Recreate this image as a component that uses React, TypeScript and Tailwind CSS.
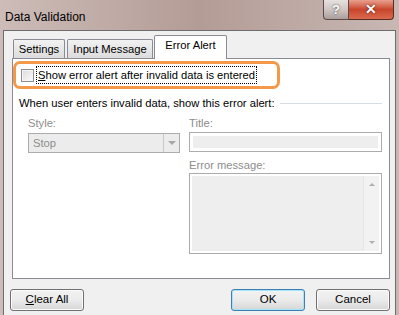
import React from "react";

const font = { fontFamily: '"Liberation Sans", Arial, sans-serif' };

function DialogButton({
  label,
  accel,
  focused,
}: {
  label: string;
  accel?: string;
  focused?: boolean;
}) {
  const rest = accel ? label.slice(1) : label;
  return (
    <button
      className={
        "w-[74px] h-[22px] rounded-[3px] border text-[11.5px] text-black bg-gradient-to-b from-[#f2f2f2] via-[#ebebeb] to-[#d6d6d6] " +
        (focused
          ? "border-[#3c7fb1] shadow-[inset_0_0_0_1px_#a6e2f8]"
          : "border-[#707070] shadow-[inset_0_0_0_1px_#fbfbfb]")
      }
    >
      {accel ? <span className="underline">{accel}</span> : null}
      {rest}
    </button>
  );
}

export default function App() {
  return (
    <div
      className="w-[399px] h-[315px] overflow-hidden flex flex-col bg-gradient-to-r from-[#cdbcb8] via-[#b49c96] to-[#c8b7b3]"
      style={font}
    >
      {/* title bar */}
      <div className="h-[30px] flex items-start relative">
        <div className="pl-[5px] pt-[8px] text-[12px] text-black">Data Validation</div>
        <div className="ml-auto mr-[5px] flex">
          <div className="w-[26px] h-[20px] rounded-bl-[4px] border border-t-0 border-[#5c4a46] bg-gradient-to-b from-[#e7e1df] via-[#cfc6c4] to-[#a99e9b] flex items-center justify-center text-[13px] font-bold text-white [text-shadow:0_0_2px_#333]">
            ?
          </div>
          <div className="w-[45px] h-[20px] rounded-br-[4px] border border-l-0 border-t-0 border-[#5c2a20] bg-gradient-to-b from-[#e8a08f] via-[#c9452b] to-[#d96a4f] flex items-center justify-center text-[14px] font-bold text-white [text-shadow:0_0_2px_#400]">
            ✕
          </div>
        </div>
      </div>

      {/* client area */}
      <div className="flex-1 ml-[3px] mr-[3px] border border-b-0 border-[#6d6d6d] bg-[#f0f0f0] text-[11.2px] text-black flex flex-col">
        {/* tabs */}
        <div className="flex items-end h-[27px] pl-[9px] relative z-10">
          <div className="w-[52px] h-[19px] flex items-center justify-center border border-b-0 border-[#898c95] rounded-t-[2px] bg-gradient-to-b from-[#f2f2f2] to-[#dcdcdc]">
            Settings
          </div>
          <div className="w-[86px] h-[19px] ml-[2px] flex items-center justify-center border border-b-0 border-[#898c95] rounded-t-[2px] bg-gradient-to-b from-[#f2f2f2] to-[#dcdcdc]">
            Input Message
          </div>
          <div className="w-[73px] h-[24px] ml-[1px] -mb-px pb-[4px] flex items-center justify-center border border-b-0 border-[#898c95] rounded-t-[2px] bg-white">
            Error Alert
          </div>
        </div>

        {/* tab panel */}
        <div className="ml-[8px] mr-[5px] h-[221px] border border-[#898c95] bg-white flex flex-col">
          <div className="mt-[2px] w-[267px] h-[28px] border-[3px] border-[#f4994a] rounded-[7px] flex items-center pl-[5px]">
            <div className="w-[13px] h-[13px] border border-[#8f8f8f] bg-gradient-to-br from-[#dcdcdc] to-[#fbfbfb] shadow-[inset_0_0_0_1px_#f4f4f4]" />
            <div className="ml-[2px] px-[1px] border border-dotted border-black leading-[16px]">
              <span className="underline">S</span>how error alert after invalid data is entered
            </div>
          </div>

          <div className="mt-[7px] ml-[6px] mr-[7px] flex items-center leading-[14px]">
            <span>When user enters invalid data, show this error alert:</span>
            <div className="flex-1 h-px ml-[5px] bg-[#d5dfe5]" />
          </div>

          <div className="mt-[6px] ml-[15px] mr-[7px] flex">
            <div className="w-[152px] flex flex-col">
              <span className="text-[#8d8d8d] leading-[14px]">Style:</span>
              <div className="mt-[3px] h-[20px] border border-[#acacac] bg-[#ececec] flex items-center">
                <span className="pl-[4px] text-[#8d8d8d] flex-1">Stop</span>
                <div className="w-[16px] h-full border-l border-[#c9c9c9] flex items-center justify-center">
                  <div className="w-0 h-0 border-l-[4px] border-r-[4px] border-t-[4px] border-l-transparent border-r-transparent border-t-[#a8a8a8]" />
                </div>
              </div>
            </div>

            <div className="ml-[9px] flex-1 flex flex-col">
              <span className="text-[#8d8d8d] leading-[14px]">Title:</span>
              <div className="mt-[2px] h-[20px] border border-[#acacac] bg-white p-[3px]">
                <div className="w-full h-full bg-[#eeeeee]" />
              </div>
              <span className="mt-[6px] text-[#8d8d8d] leading-[14px]">Error message:</span>
              <div className="mt-[1px] h-[81px] border border-[#acacac] bg-white p-[2px] flex">
                <div className="flex-1 bg-[#eeeeee]" />
                <div className="w-[16px] bg-[#f2f2f2] border-l border-[#e6e6e6] flex flex-col items-center justify-between py-[7px]">
                  <div className="w-0 h-0 border-l-[3px] border-r-[3px] border-b-[3px] border-l-transparent border-r-transparent border-b-[#b0b0b0]" />
                  <div className="w-0 h-0 border-l-[3px] border-r-[3px] border-t-[3px] border-l-transparent border-r-transparent border-t-[#b0b0b0]" />
                </div>
              </div>
            </div>
          </div>
        </div>

        {/* buttons */}
        <div className="mt-[10px] flex pl-[6px] pr-[5px]">
          <DialogButton label="Clear All" accel="C" />
          <div className="ml-auto flex gap-[11px]">
            <DialogButton label="OK" focused />
            <DialogButton label="Cancel" />
          </div>
        </div>
      </div>
    </div>
  );
}
